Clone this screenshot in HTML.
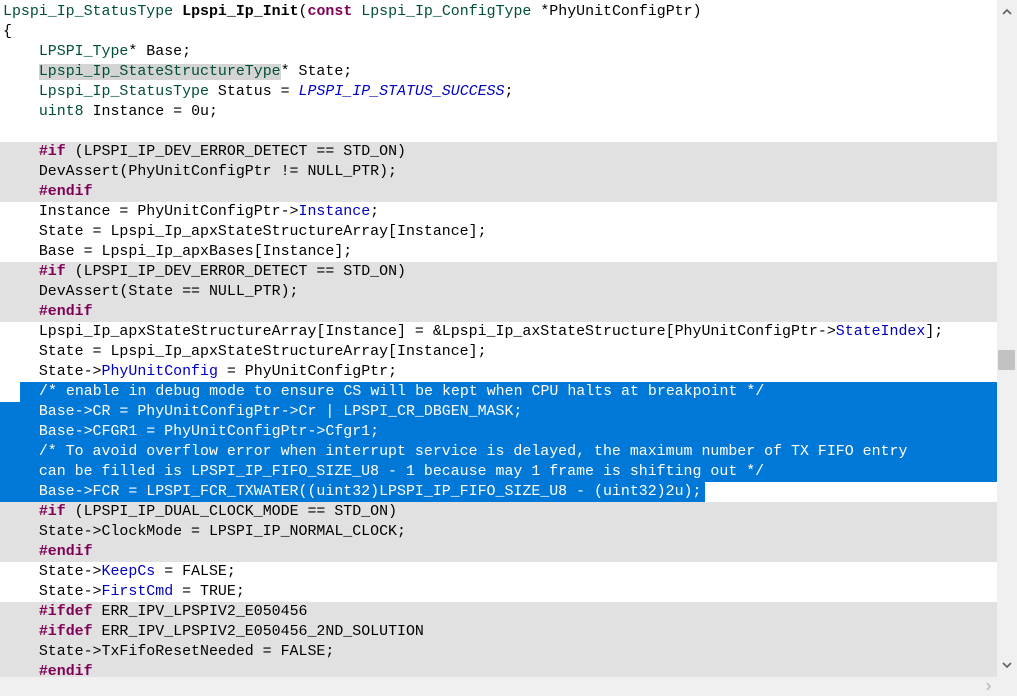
<!DOCTYPE html>
<html><head><style>
body{margin:0;width:1017px;height:696px;overflow:hidden;background:#fff;position:relative;font-family:"Liberation Mono",monospace;font-size:14.93px;}
.code{position:absolute;left:0;top:2px;width:997px;}
.l{height:20px;line-height:20px;white-space:pre;padding-left:3px;color:#000;position:relative}
.g{background:#e1e1e1}
.s{background:#0078d7;color:#fff}
.t{color:#005032}
.k{color:#7f0055;font-weight:bold}
.b{font-weight:bold}
.c{color:#0000c0;font-style:italic}
.f{color:#0000c0}
.hl{background:#d4d4d4}
.vs{position:absolute;left:997px;top:0;width:20px;height:677px;background:#f0f0f0}
.hs{position:absolute;left:0;top:677px;width:997px;height:19px;background:#f0f0f0}
.corner{position:absolute;left:997px;top:677px;width:20px;height:19px;background:#f0f0f0}
</style></head><body>
<div class="code">
<div class="l"><span class="t">Lpspi_Ip_StatusType</span> <span class="b">Lpspi_Ip_Init</span>(<span class="k">const</span> <span class="t">Lpspi_Ip_ConfigType</span> *PhyUnitConfigPtr)</div>
<div class="l">{</div>
<div class="l">    <span class="t">LPSPI_Type</span>* Base;</div>
<div class="l">    <span class="t hl">Lpspi_Ip_StateStructureType</span>* State;</div>
<div class="l">    <span class="t">Lpspi_Ip_StatusType</span> Status = <span class="c">LPSPI_IP_STATUS_SUCCESS</span>;</div>
<div class="l">    <span class="t">uint8</span> Instance = 0u;</div>
<div class="l"> </div>
<div class="l g">    <span class="k">#if</span> (LPSPI_IP_DEV_ERROR_DETECT == STD_ON)</div>
<div class="l g">    DevAssert(PhyUnitConfigPtr != NULL_PTR);</div>
<div class="l g">    <span class="k">#endif</span></div>
<div class="l">    Instance = PhyUnitConfigPtr-&gt;<span class="f">Instance</span>;</div>
<div class="l">    State = Lpspi_Ip_apxStateStructureArray[Instance];</div>
<div class="l">    Base = Lpspi_Ip_apxBases[Instance];</div>
<div class="l g">    <span class="k">#if</span> (LPSPI_IP_DEV_ERROR_DETECT == STD_ON)</div>
<div class="l g">    DevAssert(State == NULL_PTR);</div>
<div class="l g">    <span class="k">#endif</span></div>
<div class="l">    Lpspi_Ip_apxStateStructureArray[Instance] = &amp;Lpspi_Ip_axStateStructure[PhyUnitConfigPtr-&gt;<span class="f">StateIndex</span>];</div>
<div class="l">    State = Lpspi_Ip_apxStateStructureArray[Instance];</div>
<div class="l">    State-&gt;<span class="f">PhyUnitConfig</span> = PhyUnitConfigPtr;</div>
<div class="l" style="padding-left:0"><div style="position:absolute;left:20px;top:0;right:0;height:20px;background:#0078d7;color:#fff;padding-left:19px">/* enable in debug mode to ensure CS will be kept when CPU halts at breakpoint */</div></div>
<div class="l s">    Base-&gt;CR = PhyUnitConfigPtr-&gt;Cr | LPSPI_CR_DBGEN_MASK;</div>
<div class="l s">    Base-&gt;CFGR1 = PhyUnitConfigPtr-&gt;Cfgr1;</div>
<div class="l s">    /* To avoid overflow error when interrupt service is delayed, the maximum number of TX FIFO entry</div>
<div class="l s">    can be filled is LPSPI_IP_FIFO_SIZE_U8 - 1 because may 1 frame is shifting out */</div>
<div class="l"><span style="position:absolute;left:0;top:0;width:705px;height:20px;background:#0078d7"></span><span style="position:relative;color:#fff">    Base-&gt;FCR = LPSPI_FCR_TXWATER((uint32)LPSPI_IP_FIFO_SIZE_U8 - (uint32)2u);</span></div>
<div class="l g">    <span class="k">#if</span> (LPSPI_IP_DUAL_CLOCK_MODE == STD_ON)</div>
<div class="l g">    State-&gt;ClockMode = LPSPI_IP_NORMAL_CLOCK;</div>
<div class="l g">    <span class="k">#endif</span></div>
<div class="l">    State-&gt;<span class="f">KeepCs</span> = FALSE;</div>
<div class="l">    State-&gt;<span class="f">FirstCmd</span> = TRUE;</div>
<div class="l g">    <span class="k">#ifdef</span> ERR_IPV_LPSPIV2_E050456</div>
<div class="l g">    <span class="k">#ifdef</span> ERR_IPV_LPSPIV2_E050456_2ND_SOLUTION</div>
<div class="l g">    State-&gt;TxFifoResetNeeded = FALSE;</div>
<div class="l g">    <span class="k">#endif</span></div>
</div>
<div class="vs">
<svg width="20" height="677" style="position:absolute;left:0;top:0">
<path d="M6 14 L10 10 L14 14" fill="none" stroke="#606060" stroke-width="1.6"/>
<rect x="1" y="350" width="17" height="20" fill="#c2c2c2"/>
<path d="M6 663 L10 667 L14 663" fill="none" stroke="#606060" stroke-width="1.6"/>
</svg>
</div>
<div class="hs">
<svg width="997" height="19" style="position:absolute;left:0;top:0">
<path d="M987 6 L990 9.5 L987 13" fill="none" stroke="#bdbdbd" stroke-width="1.6"/>
</svg>
</div>
<div class="corner"></div>
</body></html>
